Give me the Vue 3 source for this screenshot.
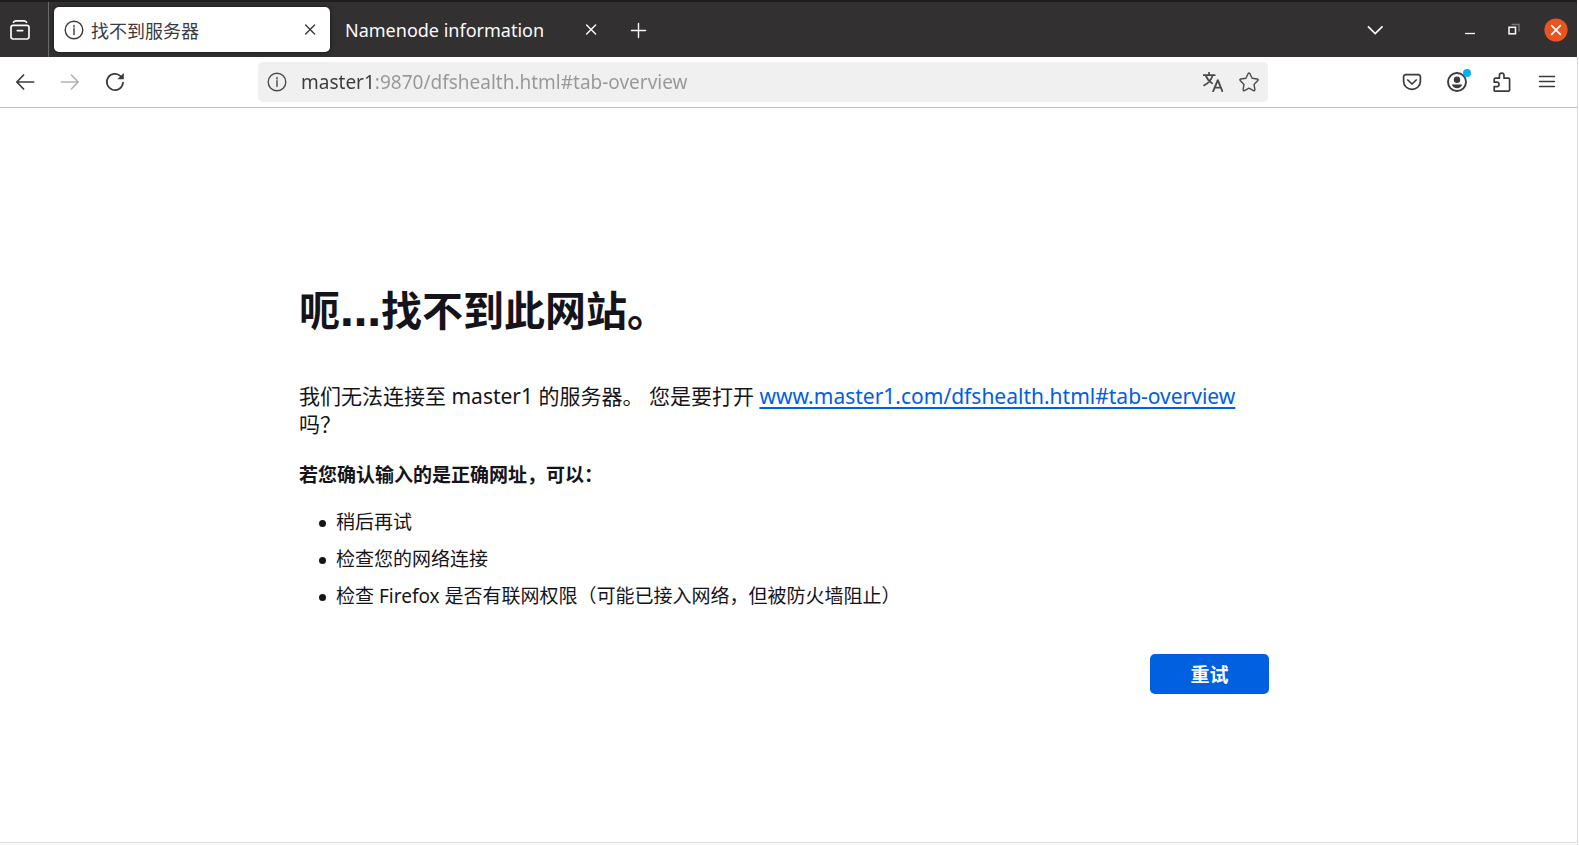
<script setup>
import { ref } from 'vue'

const tabs = ref([
  { id: 1, title: '找不到服务器', info: true },
  { id: 2, title: 'Namenode information', info: false },
])

const activeTab = ref(1)
const address = ref('master1:9870/dfshealth.html#tab-overview')

const tips = [
  '稍后再试',
  '检查您的网络连接',
  '检查 Firefox 是否有联网权限（可能已接入网络，但被防火墙阻止）',
]

const closeTab = (id) => {
  tabs.value = tabs.value.filter(tab => tab.id !== id)
}

const addTab = () => {
  tabs.value.push({ id: Date.now(), title: '新标签页', info: false })
}
</script>

<template>
  <div class="browser">
    <header class="tab-strip">
      <button class="view-btn" aria-label="Firefox View">
        <svg class="icon" viewBox="0 0 20 20">
          <path d="M3.5 2.2C4.3 1 5 .9 6 .9h8c1 0 1.7.1 2.5 1.3" />
          <rect x="1" y="5.4" width="18" height="13.6" rx="2.2" />
          <path d="M7.3 10.6h5.4" />
        </svg>
      </button>

      <div class="tabs">
        <div
          v-for="tab in tabs"
          :key="tab.id"
          class="tab"
          :class="{ active: tab.id === activeTab }"
          @click="activeTab = tab.id"
        >
          <svg v-if="tab.info" class="icon thin" viewBox="0 0 20 20">
            <circle cx="10" cy="10" r="8.8" />
            <path d="M10 8.7v5.8M10 5.4v1.6" />
          </svg>
          <span class="tab-title">{{ tab.title }}</span>
          <button class="tab-close" aria-label="Close tab" @click.stop="closeTab(tab.id)">
            <svg class="icon thin" viewBox="0 0 20 20">
              <path d="M5.6 5l9 9M14.6 5l-9 9" />
            </svg>
          </button>
        </div>
      </div>

      <button class="new-tab" aria-label="New tab" @click="addTab">
        <svg class="icon thin" viewBox="0 0 20 20">
          <path d="M10.5 3.4v14.2M3.4 10.5h14.2" />
        </svg>
      </button>

      <div class="window-controls">
        <button class="all-tabs" aria-label="List all tabs">
          <svg class="icon" viewBox="0 0 20 20">
            <path d="M2.9 6.4l7.3 7.2 7.3-7.2" />
          </svg>
        </button>
        <button aria-label="Minimize">
          <svg class="icon" viewBox="0 0 20 20">
            <path d="M5 13.5h10" stroke-width="1.3" />
          </svg>
        </button>
        <button aria-label="Restore">
          <svg class="icon" viewBox="0 0 20 20">
            <path d="M8.5 4.5h7.5v7" stroke="#777" stroke-width="1.4" />
            <rect x="6" y="7.3" width="6.5" height="6.5" stroke-width="1.5" />
          </svg>
        </button>
        <button class="close-window" aria-label="Close">
          <svg viewBox="0 0 24 24">
            <circle cx="12" cy="12" r="11.6" fill="#e95420" />
            <path d="M7.2 7.2l9.6 9.6M16.8 7.2l-9.6 9.6" fill="none" stroke="#fff" stroke-width="1.7" />
          </svg>
        </button>
      </div>
    </header>

    <nav class="toolbar">
      <div class="tools">
        <button aria-label="Back">
          <svg class="icon" viewBox="0 0 20 20">
            <path d="M18.6 10H2M8.6 3L1.8 10l6.8 7" />
          </svg>
        </button>
        <button aria-label="Forward" disabled>
          <svg class="icon" viewBox="0 0 20 20">
            <path d="M1.4 10H18M11.4 3l6.8 7-6.8 7" />
          </svg>
        </button>
        <button aria-label="Reload">
          <svg class="icon" viewBox="0 0 20 20">
            <path d="M18 10.6A8.1 8.1 0 1 1 15.6 4.2" />
            <path class="solid" d="M18.8.9v5.9a.5.5 0 0 1-.5.5h-5.9z" />
          </svg>
        </button>
      </div>

      <div class="address-bar">
        <button aria-label="Site information">
          <svg class="icon thin" viewBox="0 0 20 20">
            <circle cx="10" cy="10" r="8.8" />
            <path d="M10 8.7v5.8M10 5.4v1.6" />
          </svg>
        </button>
        <input v-model="address" type="text" aria-label="Address" spellcheck="false" />
        <button aria-label="Translate this page">
          <svg class="icon" viewBox="0 0 20 20">
            <path d="M.2 3.2h11.6M6 .6v2.6M9.6 3.4C8.4 7.6 5 11.2 1 13.4M2.8 3.6c1.2 3.2 3.6 6 6.4 7.8" />
            <path d="M10.2 19.2l4.6-11 4.6 11M11.8 15.6h6" stroke-width="1.9" />
          </svg>
        </button>
        <button aria-label="Bookmark this page">
          <svg class="icon thin" viewBox="0 0 20 20">
            <path d="M9.2 1.5q.8-1.2 1.6 0l2.3 4.7 5.1.8q1.5.4.6 1.6l-3.8 3.8.9 5.2q0 1.5-1.4 1L10 16.1l-4.5 2.5q-1.4.5-1.4-1l.9-5.2-3.8-3.8q-.9-1.2.6-1.6l5.1-.8z" />
          </svg>
        </button>
      </div>

      <div class="tools">
        <button aria-label="Save to Pocket">
          <svg class="icon" viewBox="0 0 20 20">
            <path d="M3.6 2.7h12.8a2 2 0 0 1 2 2v4.5a8.4 8.2 0 0 1-16.8 0V4.7a2 2 0 0 1 2-2z" />
            <path d="M5.8 8l4.2 4 4.2-4" />
          </svg>
        </button>
        <button class="account" aria-label="Account">
          <svg class="icon" viewBox="0 0 20 20">
            <circle cx="10" cy="10" r="9" stroke-width="1.9" />
            <circle class="solid" cx="10" cy="7.7" r="3.2" />
            <path class="solid" d="M4.6 12.6h10.8q-1.6 3.6-5.4 3.6t-5.4-3.6z" />
          </svg>
          <span class="dot"></span>
        </button>
        <button aria-label="Extensions">
          <svg class="icon" viewBox="0 0 20 20">
            <path d="M3.2 19.2q-1 0-1-1v-3.6h2.6a2.2 2.2 0 0 0 0-4.4H2.2V7.4q0-1.2 1.2-1.2h4V3.4a2.3 2.3 0 0 1 4.6 0v2.8h4.4q1.2 0 1.2 1.2V18q0 1.2-1.2 1.2z" />
          </svg>
        </button>
        <button aria-label="Menu">
          <svg class="icon" viewBox="0 0 20 20">
            <path d="M2.5 4.5h15M2.5 9.5h15M2.5 14.5h15" stroke-width="1.4" />
          </svg>
        </button>
      </div>
    </nav>

    <main class="page">
      <section class="error">
        <h1>呃…找不到此网站。</h1>
        <p class="message">
          我们无法连接至 master1 的服务器。 您是要打开
          <a href="#">www.master1.com/dfshealth.html#tab-overview</a>
          吗？
        </p>
        <h2>若您确认输入的是正确网址，可以：</h2>
        <ul>
          <li v-for="tip in tips" :key="tip">{{ tip }}</li>
        </ul>
        <div class="actions">
          <button class="retry">重试</button>
        </div>
      </section>
    </main>
  </div>
</template>

<style>
body {
  margin: 0;
  background: #fff;
}
</style>

<style scoped>
.browser {
  box-sizing: border-box;
  display: flex;
  flex-direction: column;
  min-height: 100vh;
  padding: 0 1px 1px 0;
  font-family: 'Noto Sans', 'Noto Sans CJK SC', sans-serif;
  color: #15141a;
  border-bottom: 1px solid #f0f0f0;
}

button {
  display: flex;
  align-items: center;
  justify-content: center;
  padding: 0;
  border: none;
  background: none;
  color: inherit;
  font-family: inherit;
}

.icon {
  flex: none;
  width: 20px;
  height: 20px;
  fill: none;
  stroke: currentColor;
  stroke-width: 1.7;
  stroke-linecap: round;
  stroke-linejoin: round;
}

.icon.thin {
  stroke-width: 1.4;
}

.solid {
  fill: currentColor;
  stroke: none;
}

.tab-strip {
  box-sizing: border-box;
  display: flex;
  align-items: stretch;
  height: 57px;
  margin-right: 1px;
  border-top: 2px solid #1e1c1d;
  background: #323031;
  color: #fbfbfe;
}

.view-btn {
  width: 49px;
  padding-right: 8px;
  border-right: 1px solid #6b696a;
}

.tabs {
  display: flex;
  gap: 5px;
  padding: 5px;
}

.tab {
  box-sizing: border-box;
  display: flex;
  align-items: center;
  gap: 7px;
  width: 276px;
  padding: 0 10px;
  border-radius: 5px;
  font-size: 18px;
}

.tab.active {
  background: #fff;
  color: #3b3a3f;
  box-shadow: 0 0 4px rgba(0, 0, 0, 0.5);
}

.tab-title {
  flex: 1;
  overflow: hidden;
  white-space: nowrap;
}

.new-tab {
  width: 44px;
}

.window-controls {
  display: flex;
  margin-left: auto;
}

.window-controls button {
  width: 43px;
}

.window-controls .all-tabs {
  width: 45px;
  margin-right: 51px;
}

.window-controls .icon {
  stroke-linecap: butt;
  stroke-linejoin: miter;
}

.close-window svg {
  width: 24px;
  height: 24px;
}

.toolbar {
  display: flex;
  align-items: center;
  height: 50px;
  padding: 0 8px 0 2px;
  border-right: 1px solid #ddd;
  border-bottom: 1px solid #bdbdbd;
  color: #3b3a3f;
}

.tools {
  display: flex;
}

.tools button {
  width: 45px;
  height: 40px;
}

.tools button:disabled {
  color: #b4b4b4;
}

.account {
  position: relative;
}

.dot {
  position: absolute;
  top: 7px;
  right: 8px;
  width: 8px;
  height: 8px;
  border-radius: 50%;
  background: #00b3f4;
}

.address-bar {
  box-sizing: border-box;
  display: flex;
  flex: 1;
  align-items: center;
  height: 40px;
  margin: 0 121px;
  padding: 0 1px;
  border-radius: 5px;
  background: #f0f0f0;
  color: #4b4a4f;
}

.address-bar button {
  width: 36px;
  height: 36px;
}

.address-bar input {
  flex: 1;
  min-width: 0;
  padding: 0 0 0 6px;
  border: none;
  outline: none;
  /* host name dark, the rest of the address dimmed */
  background: linear-gradient(to right, #3b3a3f 79px, #979797 79px);
  background-clip: text;
  color: transparent;
  caret-color: #3b3a3f;
  font-family: inherit;
  font-size: 19px;
}

.page {
  display: flex;
  flex: 1;
  align-items: center;
  justify-content: center;
  padding: 30px 9px 0 0;
  border-right: 1px solid #ddd;
  border-bottom: 1px solid #ddd;
}

.error {
  width: 970px;
}

h1 {
  margin: 0 0 44px;
  font-family: 'DejaVu Sans', 'Noto Sans CJK SC', sans-serif;
  font-size: 41px;
  line-height: 52px;
}

.message {
  margin: 0 0 23px;
  font-size: 21px;
  line-height: 28px;
}

.message a {
  color: #0060df;
  text-decoration-thickness: 2px;
  text-underline-offset: 3px;
}

h2 {
  margin: 0 0 19px;
  font-size: 19px;
  line-height: 28px;
}

ul {
  margin: 0;
  padding-left: 20px;
  font-size: 19px;
  line-height: 28px;
  list-style: none;
}

li {
  display: flex;
  align-items: center;
  gap: 10px;
  margin-bottom: 9px;
}

li::before {
  content: '';
  width: 7px;
  height: 7px;
  margin-top: 2px;
  border-radius: 50%;
  background: currentColor;
}

.actions {
  display: flex;
  justify-content: flex-end;
  margin-top: 44px;
}

.retry {
  width: 119px;
  height: 40px;
  border-radius: 5px;
  background: #0060df;
  color: #fbfbfe;
  font-size: 19px;
  font-weight: 600;
  cursor: pointer;
}
</style>
